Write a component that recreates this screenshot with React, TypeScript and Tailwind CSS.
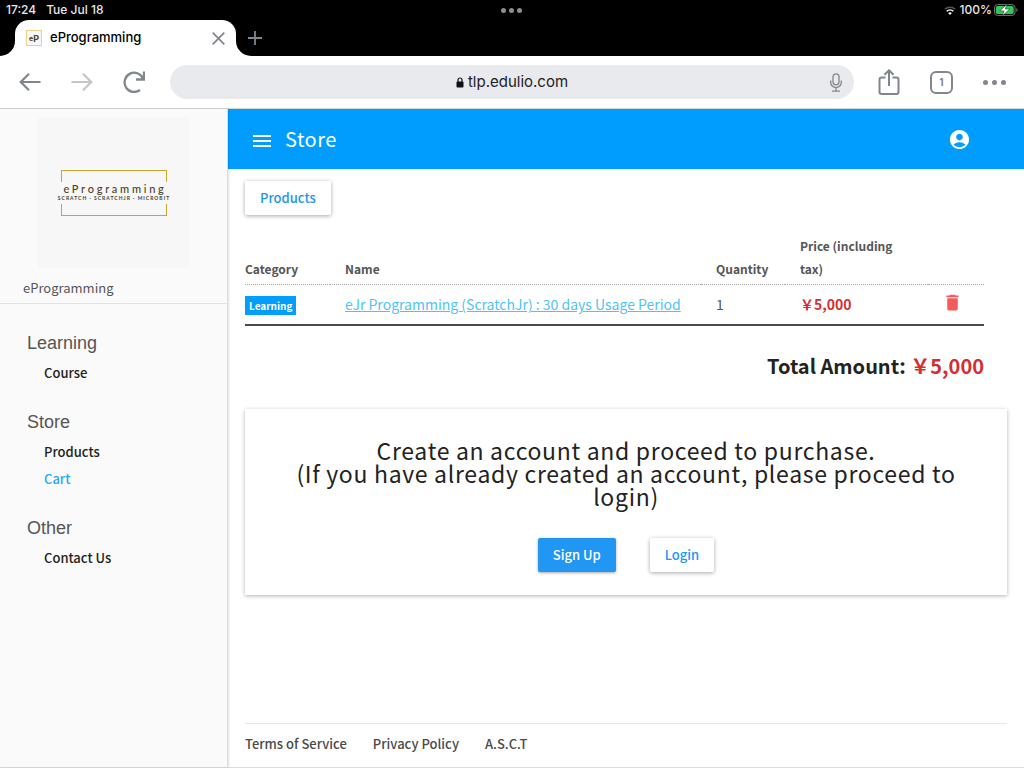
import { MdAccountCircle, MdDelete, MdMenu } from "react-icons/md";

interface INavGroup {
  title: string;
  items: string[];
}

interface ICartItem {
  id: number;
  category: string;
  name: string;
  quantity: number;
  price: string;
}

const navGroups: INavGroup[] = [
  { title: "Learning", items: ["Course"] },
  { title: "Store", items: ["Products", "Cart"] },
  { title: "Other", items: ["Contact Us"] },
];

const cartItems: ICartItem[] = [
  {
    id: 1,
    category: "Learning",
    name: "eJr Programming (ScratchJr) : 30 days Usage Period",
    quantity: 1,
    price: "￥5,000",
  },
];

const footerLinks = ["Terms of Service", "Privacy Policy", "A.S.C.T"];

const StatusBar = () => (
  <div className="grid h-5 grid-cols-3 items-center px-1.5 text-[12px] font-medium text-[#e8e8e8]">
    <div className="flex gap-2.5">
      <span>17:24</span>
      <span>Tue Jul 18</span>
    </div>
    <div className="flex justify-center gap-[3px]">
      <span className="size-[5px] rounded-full bg-[#8e8e8e]" />
      <span className="size-[5px] rounded-full bg-[#8e8e8e]" />
      <span className="size-[5px] rounded-full bg-[#8e8e8e]" />
    </div>
    <div className="flex items-center justify-end gap-1">
      <svg className="h-[9px] w-3" viewBox="0 0 12 9" fill="none" aria-hidden="true">
        <path d="M.8 3.3a7.4 7.4 0 0 1 10.4 0" stroke="#555" strokeWidth="1.5" />
        <path d="M2.7 5.3a4.7 4.7 0 0 1 6.6 0" stroke="#fff" strokeWidth="1.6" />
        <path d="M6 9 4.1 7.1a2.7 2.7 0 0 1 3.8 0Z" fill="#fff" />
      </svg>
      <div className="flex items-center gap-0.5">
        <span>100%</span>
        <svg className="h-3 w-6" viewBox="0 0 24 12" aria-hidden="true">
          <rect x=".5" y=".6" width="20.5" height="10.8" rx="3" fill="none" stroke="#777" />
          <rect x="1.8" y="1.9" width="17.9" height="8.2" rx="1.8" fill="#34c759" />
          <path d="M22.300 4.200v3.600c.9-.3 1.300-1 1.300-1.800s-.4-1.500-1.300-1.800Z" fill="#777" />
          <path d="M12.800.300 5.800 6.900h4.200L8.500 11.700l7.200-6.700h-4.400Z" fill="#fff" stroke="#0b2d14" strokeWidth=".5" />
        </svg>
      </div>
    </div>
  </div>
);

const TabStrip = () => (
  <div className="flex h-9 items-end">
    <svg className="size-[15px] shrink-0" viewBox="0 0 15 15" aria-hidden="true">
      <path d="M15 0v15H0A15 15 0 0 0 15 0Z" fill="#fff" />
    </svg>
    <div className="flex h-9 w-[221px] items-center rounded-t-[14px] bg-white px-[11px]">
      <span className="flex size-4 items-center justify-center border border-[#e6d28a] bg-[#f7f7f7] text-[9px] leading-none font-bold text-[#4a4228]">
        <span className="text-[7px]">e</span>P
      </span>
      <span className="ml-2 text-[13px] font-medium text-black">eProgramming</span>
      <button type="button" aria-label="Close tab" className="ml-auto">
        <svg className="size-[13px]" viewBox="0 0 13 13" aria-hidden="true">
          <path d="m.7.7 11.600 11.600M12.300.7.7 12.300" stroke="#80868b" strokeWidth="1.700" />
        </svg>
      </button>
    </div>
    <svg className="size-[15px] shrink-0" viewBox="0 0 15 15" aria-hidden="true">
      <path d="M0 0v15h15A15 15 0 0 1 0 0Z" fill="#fff" />
    </svg>
    <button type="button" aria-label="New tab" className="-ml-[3px] mb-[11px]">
      <svg className="size-3.5" viewBox="0 0 14 14" aria-hidden="true">
        <path d="M7 0v14M0 7h14" stroke="#80868b" strokeWidth="1.800" />
      </svg>
    </button>
  </div>
);

const Toolbar = () => (
  <div className="flex h-[53px] items-center border-b border-[#d5d5d5] bg-white pr-[18px] pl-[19px]">
    <div className="flex items-center gap-[30px]">
      <button type="button" aria-label="Back">
        <svg className="size-[22px]" viewBox="0 0 22 22" fill="none" stroke="#80868b" strokeWidth="2.200" aria-hidden="true">
          <path d="M21.500 11H2M10 2.700 1.700 11l8.300 8.300" />
        </svg>
      </button>
      <button type="button" aria-label="Forward">
        <svg className="size-[22px]" viewBox="0 0 22 22" fill="none" stroke="#c4c6c8" strokeWidth="2.200" aria-hidden="true">
          <path d="M.500 11H20M12 2.700 20.300 11 12 19.300" />
        </svg>
      </button>
      <button type="button" aria-label="Reload">
        <svg className="size-[22px]" viewBox="0 0 22 22" fill="none" stroke="#80868b" strokeWidth="2.300" aria-hidden="true">
          <path d="M17 19a9.600 9.600 0 1 1 3-11.500M21 .500v8h-8" />
        </svg>
      </button>
    </div>
    <div className="mr-6 ml-[25px] flex h-[34px] flex-1 items-center rounded-full bg-[#e8eaed] pr-3 pl-6">
      <div className="flex flex-1 items-center justify-center gap-1">
        <svg className="h-[11px] w-2" viewBox="0 0 8 11" aria-hidden="true">
          <path d="M2 5V3a2 2 0 0 1 4 0v2" fill="none" stroke="#111" strokeWidth="1.200" />
          <rect x=".5" y="4.600" width="7" height="5.800" rx="1" fill="#111" />
        </svg>
        <span className="text-[15px] text-[#202124]">tlp.edulio.com</span>
      </div>
      <button type="button" aria-label="Voice search">
        <svg className="h-[19px] w-3" viewBox="0 0 12 19" fill="none" stroke="#80868b" strokeWidth="1.300" aria-hidden="true">
          <rect x="3" y=".8" width="6" height="11" rx="3" />
          <path d="M.7 7.500v1.800a5.300 5.300 0 0 0 10.600 0V7.500M6 14.600v3.500M2 18.200h8" />
        </svg>
      </button>
    </div>
    <div className="flex items-center gap-[30px]">
      <button type="button" aria-label="Share">
        <svg className="h-[26px] w-[22px]" viewBox="0 0 22 26" fill="none" stroke="#80868b" strokeWidth="2" aria-hidden="true">
          <path d="M7.500 8.500H3.500a2 2 0 0 0-2 2V23a2 2 0 0 0 2 2h15a2 2 0 0 0 2-2V10.500a2 2 0 0 0-2-2h-4M11 17V1.500M6.500 5.800 11 1.300l4.500 4.500" />
        </svg>
      </button>
      <button
        type="button"
        aria-label="Open tabs"
        className="flex size-[23px] items-center justify-center rounded-[6px] border-2 border-[#80868b] text-[10px] font-bold text-[#80868b]"
      >
        1
      </button>
      <button type="button" aria-label="More" className="flex gap-1">
        <span className="size-[5px] rounded-full bg-[#80868b]" />
        <span className="size-[5px] rounded-full bg-[#80868b]" />
        <span className="size-[5px] rounded-full bg-[#80868b]" />
      </button>
    </div>
  </div>
);

const Logo = () => (
  <div className="mx-auto flex aspect-square w-[151px] flex-col items-center justify-center bg-[#f7f7f7]">
    <div className="h-3 w-[106px] border border-b-0 border-[#c9a52f]" />
    <div className="flex h-[22px] flex-col items-center justify-center font-['Lato'] whitespace-nowrap text-[#4a4228]">
      <span className="pl-[3px] text-[11px] leading-3 font-medium tracking-[0.25em]">eProgramming</span>
      <span className="pl-px text-[5px] leading-[7px] font-bold tracking-[0.2em]">
        SCRATCH · SCRATCHJR · MICROBIT
      </span>
    </div>
    <div className="h-3 w-[106px] border border-t-0 border-[#c9a52f]" />
  </div>
);

const Sidebar = () => (
  <aside className="z-10 w-[228px] shrink-0 border-r border-[#dcdcdc] bg-[#fafafa] shadow-[1px_0_2px_rgba(0,0,0,0.12)]">
    <div className="border-b border-[#e2e2e2] pt-2">
      <Logo />
      <p className="mt-2 ml-[23px] h-[27px] text-[13px] leading-6 text-[#555]">eProgramming</p>
    </div>
    <nav className="flex flex-col gap-5 pt-[23px] pl-[27px]">
      {navGroups.map((group) => (
        <div key={group.title}>
          <h2 className="font-['Liberation_Sans',sans-serif] text-[18px] leading-8 text-[#555]">
            {group.title}
          </h2>
          <ul className="pl-[17px] text-[13px] leading-[27px] font-medium text-[#222]">
            {group.items.map((item) => (
              <li key={item}>
                <a href="#" className={item === "Cart" ? "text-[#2aa5f7]" : ""}>
                  {item}
                </a>
              </li>
            ))}
          </ul>
        </div>
      ))}
    </nav>
  </aside>
);

const CartTable = () => (
  <table className="mt-[19px] w-full table-fixed border-collapse text-left">
    <colgroup>
      <col className="w-[85px]" />
      <col />
      <col className="w-[84px]" />
      <col className="w-[143px]" />
      <col className="w-14" />
    </colgroup>
    <thead>
      <tr className="border-b border-dotted border-[#aaa] align-bottom text-[12px] leading-[23px] text-[#555]">
        <th className="pb-1 font-bold">Category</th>
        <th className="px-[15px] pb-1 font-bold">Name</th>
        <th className="px-[15px] pb-1 font-bold">Quantity</th>
        <th className="px-[15px] pb-1 font-bold">Price (including tax)</th>
        <th aria-label="Delete" />
      </tr>
    </thead>
    <tbody>
      {cartItems.map((item) => (
        <tr key={item.id} className="h-10 border-b-2 border-[#4a4a4a] text-[14px] leading-5 text-[#555]">
          <td>
            <span className="inline-block bg-[#039dfc] px-1 text-[10px] leading-[19px] font-bold text-white">
              {item.category}
            </span>
          </td>
          <td className="px-[15px]">
            <a href="#" className="text-[#4fc3f7] underline">
              {item.name}
            </a>
          </td>
          <td className="px-[15px]">{item.quantity}</td>
          <td className="px-[15px] font-bold text-[#d32f2f]">{item.price}</td>
          <td className="pl-3.5">
            <button type="button" aria-label="Delete item" className="block pb-1 text-[#f45b5b]">
              <MdDelete className="size-[21px]" />
            </button>
          </td>
        </tr>
      ))}
    </tbody>
  </table>
);

const App = () => {
  return (
    <div className="flex min-h-screen flex-col bg-white font-['Noto_Sans_CJK_JP',sans-serif]">
      <div className="bg-black font-['Inter',sans-serif]">
        <StatusBar />
        <TabStrip />
        <Toolbar />
      </div>
      <div className="flex flex-1 border-b border-[#dcdcdc]">
        <Sidebar />
        <div className="flex min-w-0 flex-1 flex-col">
          <header className="flex h-[60px] items-center bg-[#009dff] pl-[22px] text-white">
            <button type="button" aria-label="Menu" className="pt-1">
              <MdMenu className="size-6" />
            </button>
            <h1 className="ml-[11px] text-[20px] tracking-wide">Store</h1>
            <button type="button" aria-label="Account" className="mr-[53px] ml-auto">
              <MdAccountCircle className="size-[23px]" />
            </button>
          </header>
          <main className="flex flex-1 flex-col px-[17px] pt-3">
            <button
              type="button"
              className="h-[34px] self-start rounded-xs px-[15px] text-[13px] font-medium text-[#2196f3] shadow-[0_1px_4px_rgba(0,0,0,0.35)]"
            >
              Products
            </button>
            <section className="pr-[23px]">
              <CartTable />
              <p className="mt-[22px] text-right text-[20px] leading-9 font-bold text-[#222]">
                Total Amount: <span className="text-[#d32f2f]">￥5,000</span>
              </p>
            </section>
            <section className="mt-[25px] px-10 pt-[30px] pb-[23px] text-center shadow-[0_1px_4px_rgba(0,0,0,0.3)]">
              <h2 className="text-[23px] leading-[23px] tracking-[0.03em] text-[#222]">
                Create an account and proceed to purchase.
                <br />
                (If you have already created an account, please proceed to login)
              </h2>
              <div className="mt-[30px] flex justify-center gap-[34px] text-[13px] font-medium">
                <button
                  type="button"
                  className="h-[34px] rounded-xs bg-[#2196f3] px-[15px] text-white shadow-[0_1px_3px_rgba(0,0,0,0.35)]"
                >
                  Sign Up
                </button>
                <button
                  type="button"
                  className="h-[34px] rounded-xs px-[15px] text-[#2196f3] shadow-[0_1px_4px_rgba(0,0,0,0.35)]"
                >
                  Login
                </button>
              </div>
            </section>
            <footer className="mt-auto flex gap-[26px] border-t border-[#e6e6e6] pt-2 pb-[11px] text-[13px] leading-6 font-medium text-[#4a4a4a]">
              {footerLinks.map((link) => (
                <a key={link} href="#">
                  {link}
                </a>
              ))}
            </footer>
          </main>
        </div>
      </div>
    </div>
  );
};

export default App;
